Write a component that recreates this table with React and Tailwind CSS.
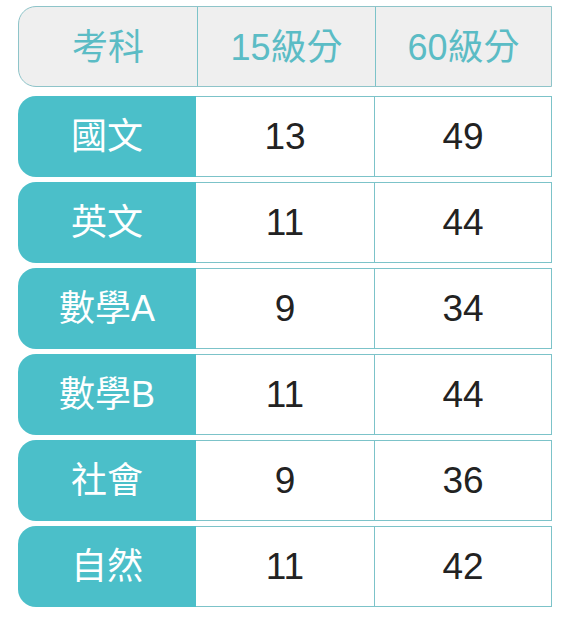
import React from 'react';

const rows = [
  { subject: '國文', s15: '13', s60: '49' },
  { subject: '英文', s15: '11', s60: '44' },
  { subject: '數學A', s15: '9', s60: '34' },
  { subject: '數學B', s15: '11', s60: '44' },
  { subject: '社會', s15: '9', s60: '36' },
  { subject: '自然', s15: '11', s60: '42' },
];

const font = { fontFamily: '"Liberation Sans", "Noto Sans CJK TC", sans-serif' };

const App = () => {
  return (
    <div className="w-[570px] h-[634px] bg-white" style={font}>
      <div className="pl-[18px] pt-[6px] w-[552px]">
        {/* Header */}
        <div className="grid grid-cols-[178px_178px_1fr] h-[81px] rounded-l-[18px] border border-[#8ec4c9] bg-[#efefef] text-[#5bbcc5] text-[36px]">
          <div className="flex items-center justify-center pt-[2px]">考科</div>
          <div className="flex items-center justify-center pt-[2px] border-l-[1.5px] border-[#7cc3c9]">15級分</div>
          <div className="flex items-center justify-center pt-[2px] border-l-[1.5px] border-[#7cc3c9]">60級分</div>
        </div>

        {/* Rows */}
        <div className="mt-[9px] flex flex-col gap-[5px]">
          {rows.map((row) => (
            <div key={row.subject} className="grid grid-cols-[178px_178px_1fr] h-[81px]">
              <div className="flex items-center justify-center rounded-l-[18px] bg-[#4bbfc9] text-white text-[36px]">
                {row.subject}
              </div>
              <div className="flex items-center justify-center border-y-[1.5px] border-[#7cc3c9] text-[#222] text-[37px]">
                {row.s15}
              </div>
              <div className="flex items-center justify-center border-[1.5px] border-[#7cc3c9] text-[#222] text-[37px]">
                {row.s60}
              </div>
            </div>
          ))}
        </div>
      </div>
    </div>
  );
};

export default App;
